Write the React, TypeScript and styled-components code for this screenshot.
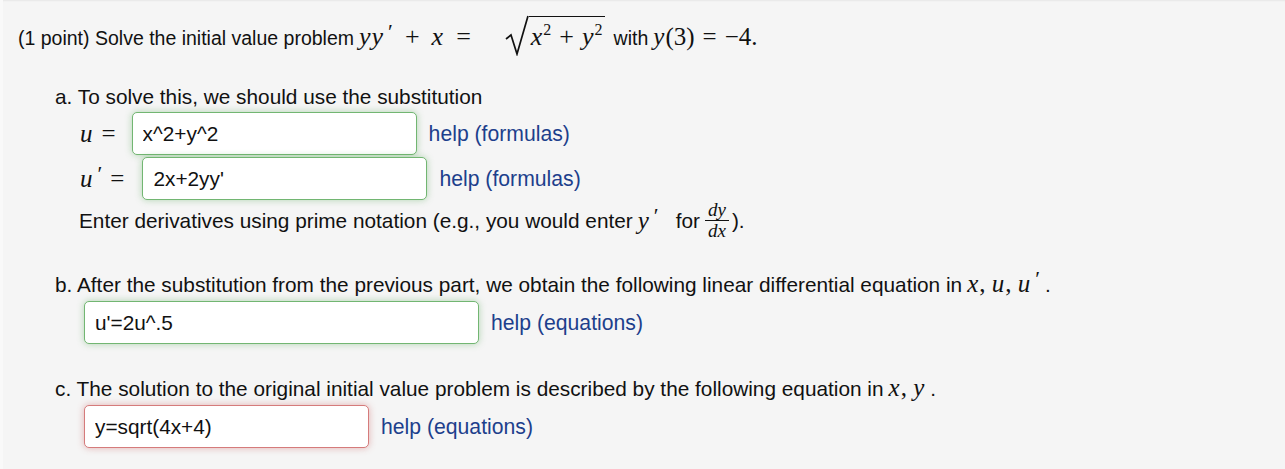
import styled, { createGlobalStyle } from "styled-components"

const GlobalStyle = createGlobalStyle`
  html, body {
    margin: 0;
    padding: 0;
    background-color: #f5f5f5;
  }
  body {
    font-family: "Liberation Sans", Arial, sans-serif;
    color: #111;
  }
`

const Page = styled.div`
  width: 1285px;
  height: 469px;
  overflow: hidden;
  box-sizing: border-box;
  background-color: #f5f5f5;
  border-left: 3px solid #f9f9f9;
  box-shadow: inset 0 2px 2px -1px rgba(0, 0, 0, 0.06);
  padding-left: 15px;
`

const Title = styled.div`
  height: 58px;
  box-sizing: border-box;
  padding-top: 15px;
  display: flex;
  align-items: baseline;
  font-size: 19.5px;
  white-space: nowrap;
`

const Part = styled.div<{ $gap: number }>`
  margin-top: ${(p) => p.$gap}px;
  margin-left: 37px;
  height: 24px;
  display: flex;
  align-items: baseline;
  font-size: 20.8px;
  white-space: nowrap;
`

const Row = styled.div<{ $gap: number; $indent: number }>`
  margin-top: ${(p) => p.$gap}px;
  margin-left: ${(p) => p.$indent}px;
  display: flex;
  align-items: center;
  font-size: 20.8px;
  white-space: nowrap;
`

const NoteRow = styled.div`
  margin-left: 61px;
  height: 42px;
  display: flex;
  align-items: center;
  font-size: 20.8px;
  white-space: nowrap;
`

const Answer = styled.input<{ $ok: boolean; $width: number }>`
  box-sizing: border-box;
  width: ${(p) => p.$width}px;
  height: 43px;
  padding: 0 10px;
  margin: 0;
  font-family: "Liberation Sans", Arial, sans-serif;
  font-size: 20.8px;
  color: #111;
  background: #fff;
  border-radius: 5px;
  border: 1px solid ${(p) => (p.$ok ? "#72b672" : "#d57b7b")};
  box-shadow: 0 0 7px ${(p) => (p.$ok ? "rgba(92, 170, 92, 0.45)" : "rgba(205, 90, 90, 0.45)")};
  outline: none;
`

const Help = styled.a`
  margin-left: 12px;
  color: #1d3f8c;
  text-decoration: none;
  font-size: 21.2px;
  cursor: pointer;
`

const Math = styled.span<{ $size?: number; $after?: number }>`
  font-family: "Liberation Serif", "DejaVu Serif", serif;
  font-size: ${(p) => p.$size ?? 25}px;
  display: inline-flex;
  align-items: baseline;
  margin: 0 ${(p) => p.$after ?? 5}px 0 5px;
`

const Label = styled(Math)<{ $right: number }>`
  margin: 0 ${(p) => p.$right}px 0 0;
`

const V = styled.i`
  font-style: italic;
  padding-right: 1px;
`

const Op = styled.span<{ $space?: number }>`
  margin: 0 ${(p) => p.$space ?? 8}px;
`

const Prime = styled.span<{ $after?: number }>`
  font-size: 22px;
  position: relative;
  top: -6px;
  margin-left: 4px;
  margin-right: ${(p) => p.$after ?? 0}px;
`

const Sup = styled.span`
  font-size: 16px;
  line-height: 0;
  position: relative;
  top: -10px;
`

const Sqrt = styled.span`
  margin-left: 22px;
  line-height: 22px;
`

const Radical = styled.svg`
  vertical-align: -11px;
`

const Radicand = styled.span`
  display: inline-block;
  border-top: 1.5px solid #111;
  padding: 9.5px 2px 0 2px;
  line-height: 22px;
`

const Frac = styled.span`
  display: inline-flex;
  flex-direction: column;
  align-items: center;
  font-family: "Liberation Serif", "DejaVu Serif", serif;
  font-style: italic;
  font-size: 19px;
  line-height: 20px;
  margin: 0 3px 0 5px;
  position: relative;
  top: -1px;
`

const FracTop = styled.span`
  border-bottom: 1px solid #111;
  padding: 0 3px;
`

export default function App() {
  return (
    <Page>
      <GlobalStyle />
      <Title>
        (1 point) Solve the initial value problem
        <Math $size={26} $after={9}>
          <V>y</V><V>y</V><Prime>′</Prime>
          <Op $space={12}>+</Op>
          <V>x</V>
          <Op $space={12}>=</Op>
          <Sqrt>
            <Radical width="24" height="41" viewBox="0 0 24 41">
              <path d="M1 24 L6 20 L12 39 L23 1" fill="none" stroke="#111" strokeWidth="1.7" />
            </Radical>
            <Radicand>
              <V>x</V><Sup>2</Sup>
              <Op>+</Op>
              <V>y</V><Sup>2</Sup>
            </Radicand>
          </Sqrt>
        </Math>
        with
        <Math>
          <V>y</V>(3)
          <Op>=</Op>
          −4.
        </Math>
      </Title>

      <Part $gap={27}>a. To solve this, we should use the substitution</Part>
      <Row $gap={3} $indent={62}>
        <Label $right={8}>
          <V>u</V>
          <Op>=</Op>
        </Label>
        <Answer $ok $width={285} readOnly value="x^2+y^2" />
        <Help>help (formulas)</Help>
      </Row>
      <Row $gap={2} $indent={62}>
        <Label $right={10}>
          <V>u</V><Prime>′</Prime>
          <Op>=</Op>
        </Label>
        <Answer $ok $width={285} readOnly value="2x+2yy'" />
        <Help>help (formulas)</Help>
      </Row>
      <NoteRow>
        Enter derivatives using prime notation (e.g., you would enter
        <Math>
          <V>y</V><Prime $after={12}>′</Prime>
        </Math>
        for
        <Frac>
          <FracTop>dy</FracTop>
          <span>dx</span>
        </Frac>
        ).
      </NoteRow>

      <Part $gap={28}>
        b. After the substitution from the previous part, we obtain the following linear differential equation in
        <Math>
          <V>x</V>,&nbsp;<V>u</V>,&nbsp;<V>u</V><Prime>′</Prime>
        </Math>
        .
      </Part>
      <Row $gap={7} $indent={66}>
        <Answer $ok $width={395} readOnly value="u'=2u^.5" />
        <Help>help (equations)</Help>
      </Row>

      <Part $gap={30}>
        c. The solution to the original initial value problem is described by the following equation in
        <Math>
          <V>x</V>,&nbsp;<V>y</V>
        </Math>
        .
      </Part>
      <Row $gap={7} $indent={66}>
        <Answer $ok={false} $width={285} readOnly value="y=sqrt(4x+4)" />
        <Help>help (equations)</Help>
      </Row>
    </Page>
  )
}
